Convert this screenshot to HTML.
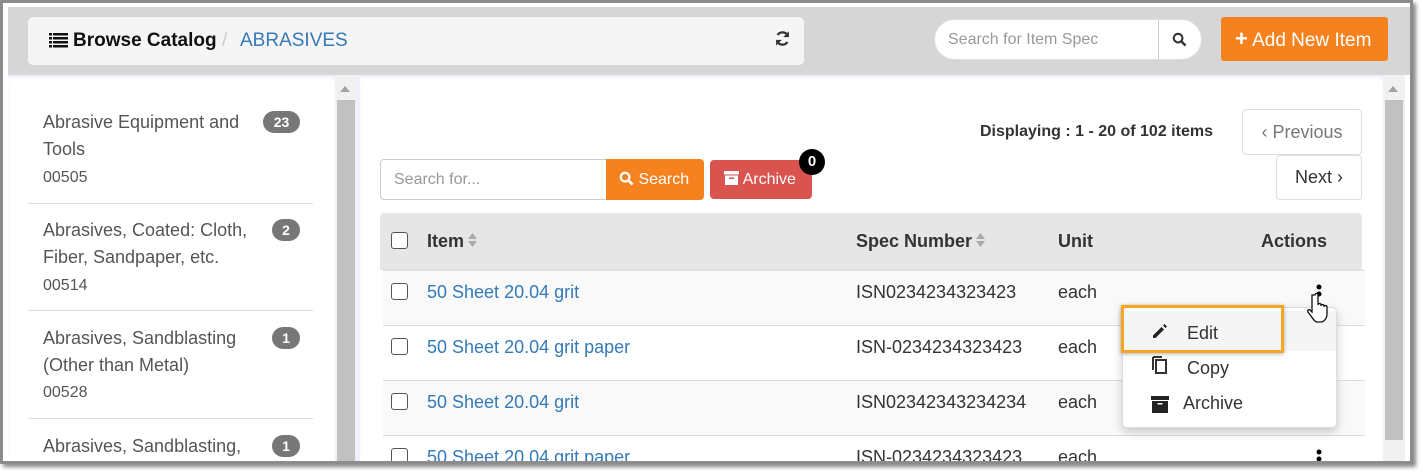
<!DOCTYPE html>
<html><head><meta charset="utf-8"><style>
*{box-sizing:border-box;margin:0;padding:0}
html,body{width:1423px;height:473px;overflow:hidden}
body{background:#fff;font-family:"Liberation Sans",Arial,sans-serif;position:relative}
.a{position:absolute}
.frame{left:0;top:0;width:1413px;height:464px;border:3px solid #8c8c8c;box-shadow:3px 3px 4px #888;background:#fff;overflow:hidden}
.side{font-size:18px;color:#555;line-height:27px}
.code{font-size:16px;color:#555}
.badge{background:#777;color:#fff;font-weight:bold;font-size:14px;border-radius:11px;height:22px;line-height:22px;text-align:center}
.sep{height:1px;background:#ddd;left:28px;width:285px}
.row{left:380px;width:982px;height:55px;border-top:1px solid #ddd}
.cb{width:17px;height:17px;border:1.5px solid #555;border-radius:3px;background:#fff}
.lnk{color:#337ab7;font-size:18px}
.txt{color:#333;font-size:18px}
.th{color:#333;font-size:18px;font-weight:bold}
.srt{display:inline-block;vertical-align:-1px;margin-left:3px}
</style></head><body>
<div class="a frame">
 <div class="a" style="left:5px;top:4px;width:1405px;height:68px;background:#d6d6d6"></div>
 <div class="a" style="left:25px;top:14px;width:776px;height:48px;background:#f5f5f5;border-radius:5px"></div>
 <svg class="a" style="left:46px;top:29px" width="19" height="16" viewBox="0 0 19 16"><g fill="#111"><rect x="0" y="1" width="3" height="2.5"/><rect x="4" y="1" width="15" height="2.5"/><rect x="0" y="5" width="3" height="2.5"/><rect x="4" y="5" width="15" height="2.5"/><rect x="0" y="9" width="3" height="2.5"/><rect x="4" y="9" width="15" height="2.5"/><rect x="0" y="13" width="3" height="2.5"/><rect x="4" y="13" width="15" height="2.5"/></g></svg>
 <div class="a" style="left:70px;top:27px;font-size:19px;font-weight:bold;color:#111">Browse Catalog</div>
 <div class="a" style="left:219px;top:27px;font-size:19px;color:#ccc">/</div>
 <div class="a" style="left:237px;top:27px;font-size:19px;color:#337ab7">ABRASIVES</div>
 <svg class="a" style="left:771px;top:27px" width="17" height="17" viewBox="0 0 24 24"><path d="M20 9A8.5 8.5 0 0 0 5 7M4 15a8.5 8.5 0 0 0 15 2" stroke="#333" stroke-width="3.2" fill="none"/><path d="M21 2v8h-8zM3 22v-8h8z" fill="#333"/></svg>
 <div class="a" style="left:931px;top:16px;width:268px;height:41px;background:#fff;border:1px solid #ddd;border-radius:21px"></div>
 <div class="a" style="left:1155px;top:17px;width:1px;height:39px;background:#ccc"></div>
 <div class="a" style="left:945px;top:28px;font-size:16px;color:#999">Search for Item Spec</div>
 <svg class="a" style="left:1169px;top:29px" width="15" height="15" viewBox="0 0 16 16"><circle cx="6.5" cy="6.5" r="4.6" stroke="#333" stroke-width="2.2" fill="none"/><path d="M10 10l4.5 4.5" stroke="#333" stroke-width="2.6"/></svg>
 <div class="a" style="left:1218px;top:14px;width:167px;height:44px;background:#f5821f;border-radius:3px;color:#fff;font-size:19px;line-height:44px;padding-left:14px"><b style="font-size:22px">+</b> Add New Item</div>
 <div class="a" style="left:5px;top:72px;width:327px;height:386px;background:#fff;box-shadow:inset 0 4px 4px -2px #e8e8ff"></div>
 <div class="a" style="left:332px;top:72px;width:22px;height:386px;background:#f1f1f1"></div>
 <div class="a" style="left:334px;top:97px;width:18px;height:361px;background:#c1c1c1"></div>
 <div class="a" style="left:337px;top:83px;width:0;height:0;border:5px solid transparent;border-bottom:6px solid #a3a3a3;border-top:0"></div>
 <div class="a" style="left:354px;top:72px;width:3px;height:386px;background:#eef0fa"></div>
 <div class="a side" style="left:40px;top:106px">Abrasive Equipment and<br>Tools</div>
 <div class="a code" style="left:40px;top:166px">00505</div>
 <div class="a badge" style="left:260px;top:108px;width:37px">23</div>
 <div class="a sep" style="top:200px;left:25px"></div>
 <div class="a side" style="left:40px;top:214px">Abrasives, Coated: Cloth,<br>Fiber, Sandpaper, etc.</div>
 <div class="a code" style="left:40px;top:274px">00514</div>
 <div class="a badge" style="left:269px;top:216px;width:28px">2</div>
 <div class="a sep" style="top:307px;left:25px"></div>
 <div class="a side" style="left:40px;top:322px">Abrasives, Sandblasting<br>(Other than Metal)</div>
 <div class="a code" style="left:40px;top:381px">00528</div>
 <div class="a badge" style="left:269px;top:324px;width:28px">1</div>
 <div class="a sep" style="top:415px;left:25px"></div>
 <div class="a side" style="left:40px;top:430px">Abrasives, Sandblasting,</div>
 <div class="a badge" style="left:269px;top:432px;width:28px">1</div>
 <div class="a" style="left:357px;top:72px;width:1023px;height:386px;background:#fff;box-shadow:inset 0 4px 4px -2px #e8e8ff"></div>
 <div class="a" style="left:1380px;top:72px;width:22px;height:386px;background:#f1f1f1"></div>
 <div class="a" style="left:1382px;top:97px;width:18px;height:340px;background:#c1c1c1"></div>
 <div class="a" style="left:1385px;top:83px;width:0;height:0;border:5px solid transparent;border-bottom:6px solid #a3a3a3;border-top:0"></div>
 <div class="a" style="left:977px;top:120px;font-size:16px;font-weight:bold;color:#333">Displaying : 1 - 20 of 102 items</div>
 <div class="a" style="left:1239px;top:106px;width:120px;height:46px;border:1px solid #ddd;border-radius:4px;color:#777;font-size:18px;line-height:44px;text-align:center">‹ Previous</div>
 <div class="a" style="left:1273px;top:152px;width:86px;height:45px;border:1px solid #ddd;border-radius:4px;color:#333;font-size:18px;line-height:43px;text-align:center">Next ›</div>
 <div class="a" style="left:377px;top:156px;width:227px;height:41px;border:1px solid #ccc;border-radius:4px 0 0 4px;padding:11px 13px;font-size:16px;color:#999">Search for...</div>
 <div class="a" style="left:603px;top:156px;width:98px;height:41px;background:#f5821f;border-radius:0 4px 4px 0;color:#fff;font-size:16px;line-height:41px;padding-left:13px"><svg width="15" height="15" viewBox="0 0 16 16" style="vertical-align:-2px"><circle cx="6.5" cy="6.5" r="4.6" stroke="#fff" stroke-width="2.4" fill="none"/><path d="M10 10l4.5 4.5" stroke="#fff" stroke-width="2.8"/></svg> Search</div>
 <div class="a" style="left:707px;top:157px;width:102px;height:39px;background:#d9534f;border-radius:4px;color:#fff;font-size:16px;line-height:39px;padding-left:14px"><svg width="15" height="14" viewBox="0 0 15 14" style="vertical-align:-1px"><rect x="0" y="0" width="15" height="3.5" fill="#fff"/><rect x="1" y="4.5" width="13" height="9.5" fill="#fff"/><rect x="5" y="6.5" width="5" height="1.5" fill="#d9534f"/></svg> Archive</div>
 <div class="a" style="left:796px;top:146px;width:26px;height:26px;border-radius:13px;background:#000;color:#fff;font-weight:bold;font-size:15px;text-align:center;line-height:26px">0</div>
 <div class="a" style="left:377px;top:210px;width:982px;height:57px;background:#e6e6e6;border-radius:4px 4px 0 0"></div>
 <div class="a cb" style="left:388px;top:229px"></div>
 <div class="a th" style="left:424px;top:228px">Item<svg class="srt" width="11" height="16" viewBox="0 0 11 16"><path d="M5.5 1L10 7H1zM5.5 15L10 9H1z" fill="#aaa"/></svg></div>
 <div class="a th" style="left:853px;top:228px">Spec Number<svg class="srt" width="11" height="16" viewBox="0 0 11 16"><path d="M5.5 1L10 7H1zM5.5 15L10 9H1z" fill="#aaa"/></svg></div>
 <div class="a th" style="left:1055px;top:228px">Unit</div>
 <div class="a th" style="left:1258px;top:228px">Actions</div>
 <div class="a row" style="top:267px;background:#f9f9f9"></div>
 <div class="a row" style="top:322px;background:#fff"></div>
 <div class="a row" style="top:377px;background:#f9f9f9"></div>
 <div class="a row" style="top:432px;background:#fff;height:26px"></div>
 <div class="a cb" style="left:388px;top:280px"></div><div class="a lnk" style="left:424px;top:279px">50 Sheet 20.04 grit</div><div class="a txt" style="left:853px;top:279px">ISN0234234323423</div><div class="a txt" style="left:1055px;top:279px">each</div>
 <div class="a cb" style="left:388px;top:335px"></div><div class="a lnk" style="left:424px;top:334px">50 Sheet 20.04 grit paper</div><div class="a txt" style="left:853px;top:334px">ISN-0234234323423</div><div class="a txt" style="left:1055px;top:334px">each</div>
 <div class="a cb" style="left:388px;top:390px"></div><div class="a lnk" style="left:424px;top:389px">50 Sheet 20.04 grit</div><div class="a txt" style="left:853px;top:389px">ISN02342343234234</div><div class="a txt" style="left:1055px;top:389px">each</div>
 <div class="a cb" style="left:388px;top:445px"></div><div class="a lnk" style="left:424px;top:444px">50 Sheet 20.04 grit paper</div><div class="a txt" style="left:853px;top:444px">ISN-0234234323423</div><div class="a txt" style="left:1055px;top:444px">each</div>
 <svg class="a" style="left:1313px;top:281px" width="6" height="18"><circle cx="3" cy="3" r="2.5"/><circle cx="3" cy="10" r="2.5"/></svg>
 <svg class="a" style="left:1313px;top:446px" width="6" height="12"><circle cx="3" cy="3" r="2.5"/><circle cx="3" cy="10" r="2.5"/></svg>
 <div class="a" style="left:1119px;top:304px;width:215px;height:121px;background:#fff;border:1px solid #ddd;border-radius:5px;box-shadow:0 4px 10px rgba(0,0,0,.2)"></div>
 <div class="a" style="left:1120px;top:308px;width:213px;height:40px;background:#f5f5f5"></div>
 <div class="a" style="left:1118px;top:302px;width:163px;height:48px;border:3px solid #f5a623;box-shadow:0 1px 4px rgba(0,0,0,.3)"></div>
 <svg class="a" style="left:1148px;top:319px" width="18" height="18" viewBox="0 0 18 18"><path d="M2 13.5V16h2.5L13 7.5 10.5 5zM14.5 6l1.5-1.5-2.5-2.5L12 3.5z" fill="#222"/></svg>
 <div class="a txt" style="left:1184px;top:320px">Edit</div>
 <svg class="a" style="left:1148px;top:353px" width="18" height="20" viewBox="0 0 18 20"><path d="M2 1v13" stroke="#333" stroke-width="2"/><path d="M2 1h9" stroke="#333" stroke-width="2"/><rect x="5" y="4" width="10" height="13" fill="none" stroke="#333" stroke-width="2"/></svg>
 <div class="a txt" style="left:1184px;top:355px">Copy</div>
 <svg class="a" style="left:1148px;top:393px" width="18" height="17" viewBox="0 0 18 17"><rect x="0" y="0" width="18" height="4" fill="#222"/><rect x="1" y="5" width="16" height="12" fill="#222"/><rect x="6.5" y="7" width="5" height="1.5" fill="#fff"/></svg>
 <div class="a txt" style="left:1180px;top:390px">Archive</div>
 <svg class="a" style="left:1303px;top:288px" width="28" height="34" viewBox="0 0 28 34"><path d="M9 4c0-2 3-2 3 0v10c0-2 3-2 3 0v1c0-2 3-2 3 0v1c0-2 3-2 3 0v7c0 4-3 8-6 8h-4c-2 0-4-3-6-6l-3-4c-1-2 1-3 2-2l2 2V4z" fill="#fff" stroke="#111" stroke-width="1.3"/></svg>
</div>
</body></html>
